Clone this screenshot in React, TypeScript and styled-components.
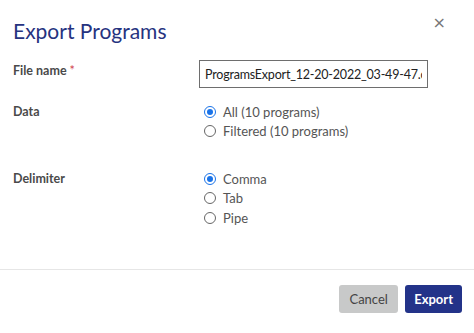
import React, { useState } from "react";
import styled, { createGlobalStyle } from "styled-components";

const GlobalStyle = createGlobalStyle`
    html, body {
        margin: 0;
        padding: 0;
        background: #ffffff;
    }
    * {
        box-sizing: border-box;
    }
`

const Modal = styled.div`
    width: 474px;
    height: 333px;
    background: #ffffff;
    font-family: Lato, "Liberation Sans", sans-serif;
    display: flex;
    flex-direction: column;
`

const Header = styled.div`
    display: flex;
    justify-content: space-between;
    align-items: flex-start;
    padding: 17px 28px 0 13px;
    height: 60px;
`

const Title = styled.h2`
    margin: 0;
    font-size: 21px;
    font-weight: 400;
    color: #26337f;
    line-height: 28px;
`

const Close = styled.button`
    border: none;
    background: none;
    padding: 0;
    margin-top: -1px;
    font-size: 16px;
    line-height: 14px;
    color: #777;
    cursor: pointer;
    font-family: "DejaVu Sans", sans-serif;
`

const Body = styled.div`
    flex: 1;
    padding: 0 13px;
    display: flex;
    flex-direction: column;
`

const Row = styled.div<{ $gap?: number }>`
    display: grid;
    grid-template-columns: 186px 1fr;
    margin-top: ${p => p.$gap || 0}px;
`

const Label = styled.div<{ $top?: number }>`
    font-size: 12.5px;
    font-weight: 700;
    color: #4a4a4a;
    padding-top: ${p => p.$top || 0}px;
    line-height: 20px;
`

const Required = styled.span`
    color: #d0404a;
    margin-left: 3px;
    font-weight: 400;
`

const TextInput = styled.input`
    width: 229px;
    height: 28px;
    border: 1px solid #6e6e6e;
    padding: 0 5px;
    font-family: Lato, "Liberation Sans", sans-serif;
    font-size: 12.5px;
    letter-spacing: -0.2px;
    color: #222;
    outline: none;
`

const RadioList = styled.div`
    display: flex;
    flex-direction: column;
`

const RadioRow = styled.label`
    display: flex;
    align-items: center;
    height: 19.5px;
    font-size: 13px;
    color: #555;
    cursor: pointer;
`

const RadioDot = styled.span<{ $on: boolean }>`
    width: 12px;
    height: 12px;
    border-radius: 50%;
    margin: 0 7px 0 5px;
    border: 1px solid ${p => (p.$on ? "#1a73e8" : "#666")};
    display: flex;
    align-items: center;
    justify-content: center;
    &::after {
        content: "";
        width: 6px;
        height: 6px;
        border-radius: 50%;
        background: ${p => (p.$on ? "#1a73e8" : "transparent")};
    }
`

const Footer = styled.div`
    border-top: 1px solid #e6e6e6;
    height: 64px;
    display: flex;
    justify-content: flex-end;
    align-items: flex-start;
    gap: 7px;
    padding: 15px 12px 0 0;
`

const Button = styled.button<{ $primary?: boolean }>`
    height: 28px;
    border: none;
    border-radius: 3px;
    padding: 0 9px;
    font-family: Lato, "Liberation Sans", sans-serif;
    font-size: 13px;
    font-weight: ${p => (p.$primary ? 700 : 400)};
    background: ${p => (p.$primary ? "#233389" : "#c8c9c9")};
    color: ${p => (p.$primary ? "#ffffff" : "#444")};
    min-width: ${p => (p.$primary ? 55 : 59)}px;
    cursor: pointer;
`

type RadioProps = { options: string[]; value: string; onChange: (v: string) => void };

const RadioGroup: React.FC<RadioProps> = ({ options, value, onChange }) => (
    <RadioList>
        {options.map(o => (
            <RadioRow key={o} onClick={() => onChange(o)}>
                <RadioDot $on={o === value} />
                {o}
            </RadioRow>
        ))}
    </RadioList>
);

export default function App() {
    const [data, setData] = useState("All (10 programs)");
    const [delim, setDelim] = useState("Comma");
    return (
        <Modal>
            <GlobalStyle />
            <Header>
                <Title>Export Programs</Title>
                <Close aria-label="Close">×</Close>
            </Header>
            <Body>
                <Row>
                    <Label $top={1}>
                        File name<Required>*</Required>
                    </Label>
                    <TextInput defaultValue="ProgramsExport_12-20-2022_03-49-47.csv" />
                </Row>
                <Row $gap={14}>
                    <Label>Data</Label>
                    <RadioGroup
                        options={["All (10 programs)", "Filtered (10 programs)"]}
                        value={data}
                        onChange={setData}
                    />
                </Row>
                <Row $gap={28}>
                    <Label>Delimiter</Label>
                    <RadioGroup options={["Comma", "Tab", "Pipe"]} value={delim} onChange={setDelim} />
                </Row>
            </Body>
            <Footer>
                <Button>Cancel</Button>
                <Button $primary>Export</Button>
            </Footer>
        </Modal>
    );
}
